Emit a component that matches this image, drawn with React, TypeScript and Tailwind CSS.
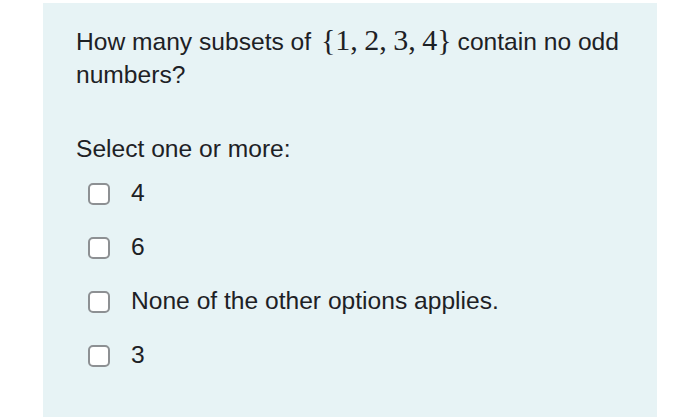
import React from "react";

const OPTIONS = ["4", "6", "None of the other options applies.", "3"];

const Checkbox: React.FC = () => (
  <span className="block w-[22px] h-[22px] shrink-0 rounded-[5px] border-2 border-[#8d9093] bg-white" />
);

const App: React.FC = () => {
  return (
    <div className="w-[700px] h-[417px] bg-white pl-[43px] pt-[3px] overflow-hidden">
      <div className="w-[614px] h-[414px] bg-[#e7f3f5] pl-[33px] pt-[22px] text-[#1d2125] font-['Liberation_Sans',Arial,sans-serif] text-[24.6px] leading-[33px]">
        <p className="w-[560px]">
          How many subsets of{" "}
          <span className="ml-[3px] mr-[-1px] font-['Liberation_Serif','Times_New_Roman',serif] text-[30px] leading-none [word-spacing:-1px]">
            {"{1, 2, 3, 4}"}
          </span>{" "}
          contain no odd numbers?
        </p>

        <p className="mt-[41px]">Select one or more:</p>

        <div className="mt-[2px] flex flex-col">
          {OPTIONS.map((opt) => (
            <label
              key={opt}
              className="flex items-center h-[54px] pl-[12px] gap-[21px]"
            >
              <Checkbox />
              <span className="pb-[4px]">{opt}</span>
            </label>
          ))}
        </div>
      </div>
    </div>
  );
};

export default App;
